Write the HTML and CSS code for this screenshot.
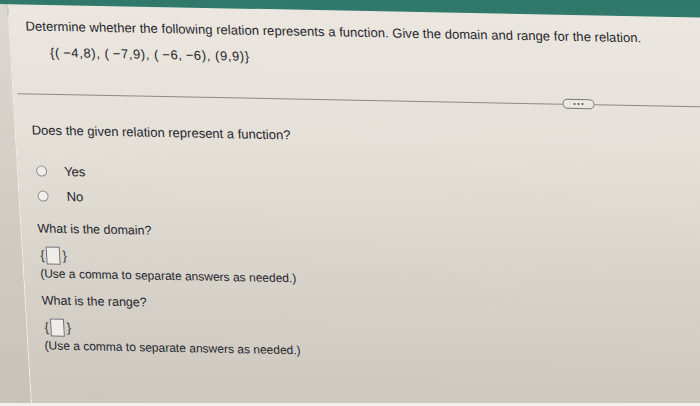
FILE: index.html
```html
<!DOCTYPE html>
<html lang="en">
<head>
<meta charset="utf-8">
<title>Relation question</title>
<link rel="stylesheet" href="styles.css">
</head>
<body>
<div class="screen">
  <div class="topbar"></div>
  <div class="frame">
    <div class="bezel"></div>
    <main class="page">
      <p class="question">Determine whether the following relation represents a function. Give the domain and range for the relation.</p>
      <p class="set">{(&#8201;&minus;4,8), (&#8201;&minus;7,9), (&#8201;&minus;6,&#8201;&minus;6), (9,9)}</p>
      <div class="divider">
        <span class="rule rule-left"></span>
        <button class="more" type="button" aria-label="More"><i></i><i></i><i></i></button>
        <span class="rule rule-right"></span>
      </div>
      <p class="prompt prompt-first">Does the given relation represent a function?</p>
      <ul class="options">
        <li class="option"><span class="radio"></span><span class="opt-yes">Yes</span></li>
        <li class="option"><span class="radio"></span><span class="opt-no">No</span></li>
      </ul>
      <p class="prompt prompt-domain">What is the domain?</p>
      <div class="answer"><span class="brace">{</span><span class="box"></span><span class="brace">}</span></div>
      <p class="hint">(Use a comma to separate answers as needed.)</p>
      <p class="prompt prompt-range">What is the range?</p>
      <div class="answer"><span class="brace">{</span><span class="box"></span><span class="brace">}</span></div>
      <p class="hint">(Use a comma to separate answers as needed.)</p>
    </main>
  </div>
</div>
<div class="footer"></div>
</body>
</html>
```
FILE: styles.css
```css
html, body {
  margin: 0;
  padding: 0;
}
body {
  width: 700px;
  height: 406px;
  overflow: hidden;
  font-family: "Liberation Sans", Arial, sans-serif;
  color: #25252d;
  background: linear-gradient(to bottom, #2f786a 0, #2f786a 20px, #ccc8bf 20px);
}
.screen {
  width: 800px;
  height: 403px;
  margin-left: -40px;
  display: flex;
  flex-direction: column;
  transform-origin: 40px 0;
  transform: matrix(1, 0.0192, 0.0594, 1, 0, 0);
}
.topbar {
  height: 4px;
  flex: none;
  background: #30796b;
}
.frame {
  flex: 1;
  display: flex;
}
.bezel {
  width: 47px;
  flex: none;
  background: linear-gradient(to bottom, #ddd8cf, #d2cdc4 50%, #c7c3b9);
  border-right: 1px solid #f2efe9;
  box-shadow: 1px 0 0 #cfcac1;
}
.page {
  flex: 1;
  padding-left: 16px;
  background: linear-gradient(to bottom, #ebe6df 0%, #e4dfd7 35%, #d6d2c9 70%, #ccc8bf 100%);
}
p {
  margin: 0;
}
.question {
  margin-top: 14px;
  font-size: 13px;
  line-height: 16px;
  letter-spacing: 0.04px;
  white-space: nowrap;
}
.set {
  margin-top: 10px;
  padding-left: 23px;
  font-size: 13px;
  line-height: 16px;
  letter-spacing: 0.6px;
  white-space: nowrap;
}
.divider {
  margin-top: 28px;
  margin-left: -12px;
  height: 10px;
  display: flex;
  align-items: center;
}
.rule {
  height: 1px;
  background: #8c8984;
}
.rule-left {
  width: 545px;
}
.rule-right {
  flex: 1;
}
.more {
  width: 32px;
  height: 10px;
  padding: 0;
  margin: 0;
  border: 1px solid #77767a;
  border-radius: 6px;
  background: #ebe8e3;
  display: flex;
  align-items: center;
  justify-content: center;
  gap: 2px;
}
.more i {
  width: 2px;
  height: 2px;
  background: #4f4f55;
  border-radius: 1px;
}
.prompt {
  font-size: 13px;
  line-height: 16px;
}
.prompt-first {
  margin-top: 24px;
}
.prompt-domain {
  margin-top: 17px;
  font-size: 12.5px;
}
.prompt-range {
  margin-top: 11px;
  font-size: 12.5px;
}
.options {
  list-style: none;
  margin: 24px 0 0 0;
  padding: 0;
  display: flex;
  flex-direction: column;
  gap: 9px;
}
.option {
  height: 16px;
  display: flex;
  align-items: center;
  font-size: 13px;
}
.radio {
  width: 9px;
  height: 9px;
  margin-left: 2px;
  margin-right: 17px;
  border: 1.5px solid #8f8f98;
  border-radius: 50%;
  background: #f1eee9;
}
.opt-no {
  margin-left: 1px;
}
.answer {
  margin-top: 9px;
  height: 19px;
  display: flex;
  align-items: center;
  padding-left: 1px;
}
.brace {
  font-size: 13px;
  line-height: 16px;
  color: #3a3a40;
}
.box {
  width: 12px;
  height: 16px;
  margin: 0 2px;
  border: 1.3px solid #707074;
  background: #f0ede8;
}
.hint {
  margin-top: 2px;
  font-size: 12px;
  line-height: 15px;
  color: #25252e;
}
.footer {
  position: relative;
  height: 3px;
  background: #f2f0ec;
}
```
